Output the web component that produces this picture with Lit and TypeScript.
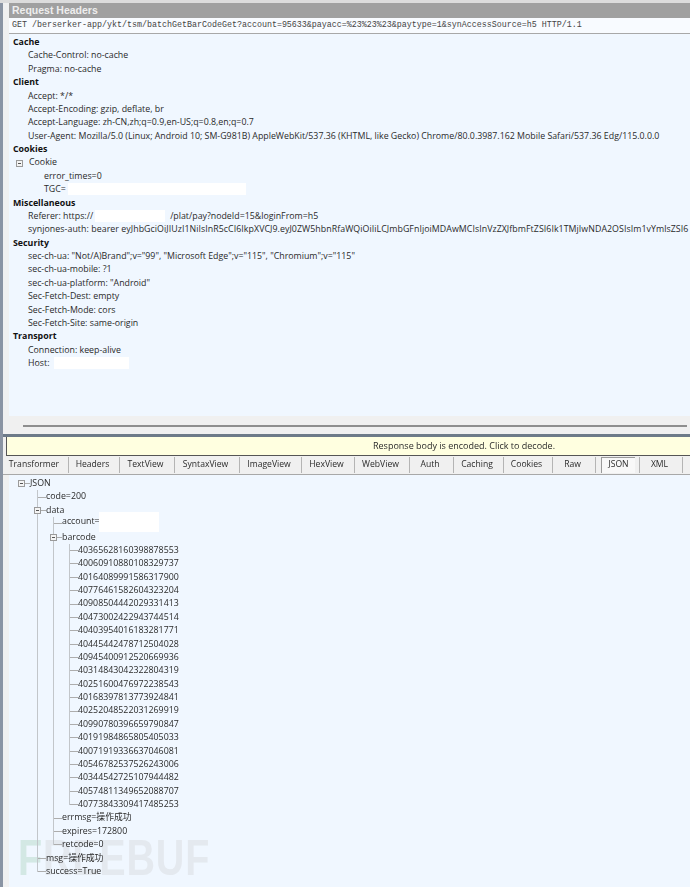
import { LitElement, html, css } from "lit";
import { customElement } from "lit/decorators.js";

type Node = { t?: unknown; kids?: Node[] };
const nums = [
"40365628160398878553","40060910880108329737","40164089991586317900","40776461582604323204","40908504442029331413",
"40473002422943744514","40403954016183281771","40445442478712504028","40945400912520669936","40314843042322804319",
"40251600476972238543","40168397813773924841","40252048522031269919","40990780396659790847","40191984865805405033",
"40071919336637046081","40546782537526243006","40344542725107944482","40574811349652088707","40773843309417485253"];

const tabs = ["Transformer","Headers","TextView","SyntaxView","ImageView","HexView","WebView","Auth","Caching","Cookies","Raw","JSON","XML"];

@customElement("app-root")
export class AppRoot extends LitElement {
  static styles = css`
    :host { display: block; width: 690px; height: 887px; overflow: hidden; background: #f0f0f0; position: relative;
      font-family: "Open Sans", "Noto Sans CJK SC", sans-serif; font-size: 8.82px; color: #2a2a2a; }
    .frame { height: 887px; display: flex; flex-direction: column; border-left: 3px solid #8a94a3; box-sizing: border-box; filter: blur(0.35px); }
    .top { height: 3px; background: #dcdcdc; margin-left: -3px; flex: none; }
    .req { margin-left: 6px; flex: none; display: flex; flex-direction: column; height: 413px; }
    .title { height: 15px; background: #a0a0a0; color: #eeeeee; font-weight: 700; font-size: 10.5px; line-height: 15px; padding-left: 3px; flex: none; font-family: "Liberation Sans", sans-serif; }
    .line { height: 15px; background: #f8fbff; border-bottom: 1px solid #a8a8a8; font-family: "Liberation Mono", monospace; font-size: 8.33px; line-height: 15px; padding-left: 3px; white-space: nowrap; flex: none; color: #444; }
    .hdrs { flex: 1; background: #f0f7ff; padding-top: 2px; overflow: hidden; }
    .r { height: 13.38px; line-height: 13.38px; white-space: nowrap; }
    .h { font-weight: 700; padding-left: 4px; color: #111; }
    .k { padding-left: 19px; }
    .kk { padding-left: 35px; }
    .wide { letter-spacing: .056px; }
    .ck { padding-left: 7px; display: flex; align-items: center; gap: 6px; }
    .mask { display: inline-block; background: #fff; vertical-align: top; height: 12px; margin-left: 2px; }
    .m-tgc { width: 178px; }
    .m-ref { width: 70px; margin-right: 5px; }
    .m-host { width: 75px; }
    .m-acc { width: 60px; height: 20px; margin: -3px 0 0 -1px; }
    .split { height: 17px; flex: none; display: flex; align-items: center; padding: 0 3px 0 20px; margin-top: 1px; }
    .split i { display: block; height: 2px; background: #8e8e8e; width: 100%; }
    .sep { height: 3px; background: #6d7a88; flex: none; }
    .notice { height: 19px; flex: none; background: #ffffe0; border: 1px solid #555; border-top: 0; border-right: 0; box-sizing: border-box; margin-left: 3px; line-height: 18px; font-size: 9px; padding-left: 366px; white-space: nowrap; }
    .tabs { display: grid; grid-template-columns: 66px 51px 55px 65px 62px 53px 55px 44px 50px 49px 43px 44px 43px; height: 19px; flex: none; border-bottom: 1px solid #a8a8a8; box-sizing: border-box; font-size: 8.6px; }
    .tab { border-right: 1px solid #b4b4b4; text-align: center; line-height: 14px; height: 16px; padding-right: 3px; white-space: nowrap; margin-top: 1px; }
    .tab.on { padding-right: 0; }
    .tab.on span { display: block; background: #f8f8f8; border: 1px solid #9a9a9a; border-bottom: 0; border-right: 0; margin: 0 4px 0 5px; height: 15px; line-height: 13px; }
    .tree { flex: 1; margin-left: 6px; background: #f0f7ff; padding: 2px 0 0 9px; overflow: hidden; position: relative; }
    .tree > ul { position: relative; z-index: 1; padding: 0; }
    .tree > ul > li > ul { padding-left: 28px; }
    ul { list-style: none; margin: 0; padding: 0 0 0 16px; }
    li { position: relative; }
    .n { height: 13.38px; line-height: 13.38px; white-space: nowrap; display: flex; align-items: center; }
    li li::before { content: ""; position: absolute; left: -9px; top: 0; bottom: 0; border-left: 1px solid #c2c6ca; }
    li li:last-child::before { bottom: auto; height: 7px; }
    li li > .n::before { content: ""; width: 8px; margin-left: -8px; border-top: 1px solid #adadad; flex: none; }
    li li > .n.b::before { display: none; }
    .box { width: 7px; height: 7px; border: 1px solid #9a9a9a; background: #f4f4f4; box-sizing: border-box; position: relative; flex: none; margin-left: -12px; }
    .tree > ul > li > .n .box { margin-left: 0; }
    .box::after { content: ""; position: absolute; left: 1px; right: 1px; top: 2px; height: 1px; background: #555; }
    .dash { width: 5px; border-top: 1px solid #adadad; flex: none; }
    .ck .box { margin: 0; }
    .wm { position: absolute; left: 9px; top: 360px; font-family: "Liberation Sans", sans-serif; font-weight: 700; font-size: 50px; line-height: 46px; letter-spacing: 1px; color: #e4e9ef; white-space: nowrap; transform: scaleX(.79); transform-origin: left center; }
    .wm b { color: #d3e8e4; font-weight: 700; }
  `;

  private node(n: Node) {
    return html`<li>
      <div class="n ${n.kids ? "b" : ""}">${n.kids ? html`<span class="box"></span><span class="dash"></span>` : ""}<span>${n.t}</span></div>
      ${n.kids ? html`<ul>${n.kids.map((k) => this.node(k))}</ul>` : ""}
    </li>`;
  }

  render() {
    const tree: Node = { t: "JSON", kids: [
      { t: "code=200" },
      { t: "data", kids: [
        { t: html`account=<span class="mask m-acc"></span>` },
        { t: "barcode", kids: nums.map((t) => ({ t })) },
        { t: "errmsg=操作成功" }, { t: "expires=172800" }, { t: "retcode=0" },
      ] },
      { t: "msg=操作成功" }, { t: "success=True" },
    ] };
    return html`
      <div class="frame">
        <div class="top"></div>
        <section class="req">
          <div class="title">Request Headers</div>
          <div class="line">GET /berserker-app/ykt/tsm/batchGetBarCodeGet?account=95633&amp;payacc=%23%23%23&amp;paytype=1&amp;synAccessSource=h5 HTTP/1.1</div>
          <div class="hdrs">
            <div class="r h">Cache</div>
            <div class="r k">Cache-Control: no-cache</div>
            <div class="r k">Pragma: no-cache</div>
            <div class="r h">Client</div>
            <div class="r k">Accept: */*</div>
            <div class="r k">Accept-Encoding: gzip, deflate, br</div>
            <div class="r k">Accept-Language: zh-CN,zh;q=0.9,en-US;q=0.8,en;q=0.7</div>
            <div class="r k">User-Agent: Mozilla/5.0 (Linux; Android 10; SM-G981B) AppleWebKit/537.36 (KHTML, like Gecko) Chrome/80.0.3987.162 Mobile Safari/537.36 Edg/115.0.0.0</div>
            <div class="r h">Cookies</div>
            <div class="r ck"><span class="box"></span><span>Cookie</span></div>
            <div class="r kk">error_times=0</div>
            <div class="r kk">TGC=<span class="mask m-tgc"></span></div>
            <div class="r h">Miscellaneous</div>
            <div class="r k">Referer: https://<span class="mask m-ref"></span>/plat/pay?nodeId=15&amp;loginFrom=h5</div>
            <div class="r k wide">synjones-auth: bearer eyJhbGciOiJIUzI1NiIsInR5cCI6IkpXVCJ9.eyJ0ZW5hbnRfaWQiOiIiLCJmbGFnIjoiMDAwMCIsInVzZXJfbmFtZSI6Ik1TMjIwNDA2OSIsIm1vYmlsZSI6</div>
            <div class="r h">Security</div>
            <div class="r k">sec-ch-ua: "Not/A)Brand";v="99", "Microsoft Edge";v="115", "Chromium";v="115"</div>
            <div class="r k">sec-ch-ua-mobile: ?1</div>
            <div class="r k">sec-ch-ua-platform: "Android"</div>
            <div class="r k">Sec-Fetch-Dest: empty</div>
            <div class="r k">Sec-Fetch-Mode: cors</div>
            <div class="r k">Sec-Fetch-Site: same-origin</div>
            <div class="r h">Transport</div>
            <div class="r k">Connection: keep-alive</div>
            <div class="r k">Host: <span class="mask m-host"></span></div>
          </div>
        </section>
        <div class="split"><i></i></div>
        <div class="sep"></div>
        <div class="notice">Response body is encoded. Click to decode.</div>
        <div class="tabs">${tabs.map((t) => html`<div class="tab ${t === "JSON" ? "on" : ""}"><span>${t}</span></div>`)}</div>
        <section class="tree">
          <div class="wm" aria-hidden="true"><b>F</b>REEBUF</div>
          <ul>${this.node(tree)}</ul>
        </section>
      </div>
    `;
  }
}
